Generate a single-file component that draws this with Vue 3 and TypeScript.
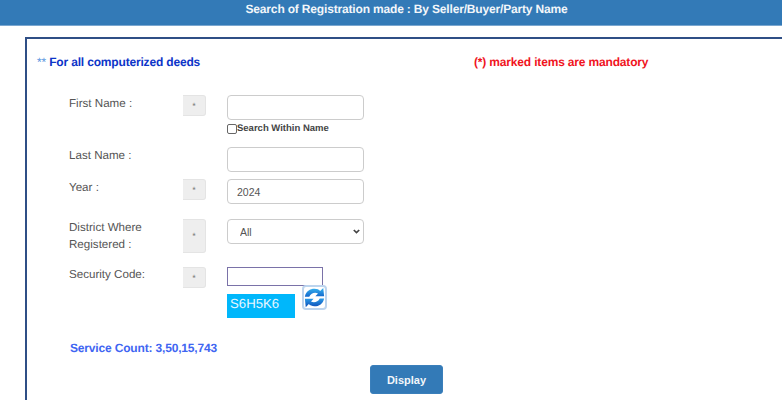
<script setup lang="ts">
import { ref } from 'vue'
const firstName = ref('')
const lastName = ref('')
const year = ref('2024')
const district = ref('All')
const code = ref('')
</script>

<template>
  <div class="page">
    <header class="title">Search of Registration made : By Seller/Buyer/Party Name</header>
    <main class="panel">
      <div class="notes">
        <span class="note-blue"><span class="stars">**</span> For all computerized deeds</span>
        <span class="note-red">(*) marked items are mandatory</span>
      </div>

      <div class="row row-first">
        <label class="label">First Name :</label>
        <span class="addon">*</span>
        <div class="field">
          <input v-model="firstName" class="control" type="text" />
          <label class="within"><input class="check" type="checkbox" />Search Within Name</label>
        </div>
      </div>

      <div class="row row-last">
        <label class="label">Last Name :</label>
        <span class="addon addon-empty"></span>
        <div class="field"><input v-model="lastName" class="control" type="text" /></div>
      </div>

      <div class="row row-year">
        <label class="label">Year :</label>
        <span class="addon">*</span>
        <div class="field"><input v-model="year" class="control" type="text" /></div>
      </div>

      <div class="row row-district">
        <label class="label label-wrap">District Where Registered :</label>
        <span class="addon addon-tall">*</span>
        <div class="field">
          <select v-model="district" class="control select">
            <option>All</option>
          </select>
        </div>
      </div>

      <div class="row row-security">
        <label class="label label-code">Security Code:</label>
        <span class="addon">*</span>
        <div class="field">
          <input v-model="code" class="code-input" type="text" />
          <div class="captcha-row">
            <span class="captcha">S6H5K6</span>
            <button class="refresh" type="button" aria-label="Refresh code">
              <svg viewBox="0 0 24 24" width="21" height="21">
                <defs>
                  <linearGradient id="arrowTop" x1="0" y1="0" x2="0" y2="1">
                    <stop offset="0" stop-color="#35b4f0" />
                    <stop offset="1" stop-color="#1468cc" />
                  </linearGradient>
                  <linearGradient id="arrowBottom" x1="0" y1="1" x2="0" y2="0">
                    <stop offset="0" stop-color="#0f4fb8" />
                    <stop offset="1" stop-color="#2a9ce8" />
                  </linearGradient>
                </defs>
                <path d="M1 11C2 5 7 2 12 2C15 2 17 3 18.500 4.500L22 1L23 10.500L13 10.500L16 7.500C12.500 5.500 8 7 6 11Z" fill="url(#arrowTop)" />
                <path d="M23 13C22 19 17 22 12 22C9 22 7 21 5.500 19.500L2 23L1 13.500L11 13.500L8 16.500C11.500 18.500 16 17 18 13Z" fill="url(#arrowBottom)" />
              </svg>
            </button>
          </div>
        </div>
      </div>

      <p class="count">Service Count: 3,50,15,743</p>
      <button class="display" type="button">Display</button>
    </main>
  </div>
</template>

<style>
html, body { margin: 0; padding: 0; background: #fff; overflow: hidden; }
</style>

<style scoped>
.page {
  width: 782px;
  height: 400px;
  overflow: hidden;
  background: #fff;
  font-family: "Liberation Sans", Arial, sans-serif;
  font-size: 11.6px;
  color: #555;
  text-rendering: geometricPrecision;
}
.title {
  box-sizing: border-box;
  height: 26px;
  padding: 2px 0 0 31px;
  background: #337ab7;
  border-bottom: 1px solid #7ba7d0;
  color: #f2f6fa;
  font-size: 12px;
  font-weight: bold;
  letter-spacing: -0.17px;
  line-height: 14px;
  text-align: center;
}
.panel {
  box-sizing: border-box;
  width: 800px;
  height: 420px;
  margin: 11px 0 0 25px;
  padding: 16px 0 0 10px;
  border-top: 2px solid #2f4f86;
  border-left: 2px solid #2f4f86;
}
.notes {
  display: flex;
  height: 15px;
  font-size: 12px;
  font-weight: bold;
  letter-spacing: -0.17px;
  line-height: 14px;
}
.note-blue { width: 437px; color: #0d35c8; }
.stars { color: #5a96e0; font-weight: normal; }
.note-red { color: #f0141e; }
.row {
  display: grid;
  grid-template-columns: 93px 23px 1fr;
  column-gap: 21px;
  padding-left: 32px;
  align-items: start;
}
.row-first { margin-top: 25px; }
.row-last { margin-top: 12px; }
.row-year { margin-top: 7px; }
.row-district { margin-top: 15px; }
.row-security { margin-top: 14px; }
.label {
  line-height: 17px;
  color: #555;
}
.label-wrap { width: 90px; }
.label-code { margin-top: -1px; }
.addon {
  box-sizing: border-box;
  display: flex;
  align-items: center;
  justify-content: center;
  height: 21px;
  background: #eee;
  border: 1px solid #e4e4e4;
  border-left: 0;
  border-radius: 0 3px 3px 0;
  color: #777;
  font-size: 9px;
}
.addon-empty { visibility: hidden; }
.addon-tall { height: 34px; }
.field { width: 137px; }
.control {
  box-sizing: border-box;
  display: block;
  width: 137px;
  height: 25px;
  padding: 0 9px;
  background: #fff;
  border: 1px solid #ccc;
  border-radius: 4px;
  color: #555;
  font-family: inherit;
  font-size: 10.5px;
  outline: none;
}
.select {
  padding: 0 12px;
  appearance: none;
  background-image: url("data:image/svg+xml,%3Csvg xmlns='http://www.w3.org/2000/svg' width='7' height='5'%3E%3Cpath d='M.8 1l2.700 2.600L6.200 1' fill='none' stroke='%23444' stroke-width='1.700'/%3E%3C/svg%3E");
  background-repeat: no-repeat;
  background-position: right 3px center;
}
.within {
  display: flex;
  align-items: center;
  height: 13px;
  margin-top: 2px;
  color: #444;
  font-size: 9.5px;
  font-weight: bold;
}
.check {
  box-sizing: border-box;
  width: 10px;
  height: 10px;
  margin: 0;
  appearance: none;
  background: #fff;
  border: 1px solid #666;
  border-radius: 2px;
}
.code-input {
  box-sizing: border-box;
  display: block;
  width: 96px;
  height: 19px;
  padding: 0 2px;
  background: #fff;
  border: 1px solid #7a72a8;
  outline: none;
}
.captcha-row {
  display: flex;
  align-items: flex-start;
  margin-top: 8px;
}
.captcha {
  box-sizing: border-box;
  display: block;
  flex: none;
  width: 68px;
  height: 24px;
  padding: 1px 0 0 3px;
  background: #00b7fb;
  color: #e8f6ff;
  font-size: 13.2px;
  line-height: 17px;
}
.refresh {
  box-sizing: border-box;
  display: flex;
  align-items: center;
  justify-content: center;
  flex: none;
  width: 25px;
  height: 25px;
  margin: -9px 0 0 7px;
  padding: 0;
  background: #fff;
  border: 2px solid #bcd4ee;
  border-radius: 4px;
}
.count {
  margin: 23px 0 0 33px;
  color: #3f66f2;
  font-size: 12px;
  font-weight: bold;
  letter-spacing: -0.17px;
  line-height: 14px;
}
.display {
  box-sizing: border-box;
  display: block;
  width: 73px;
  height: 29px;
  margin: 10px 0 0 333px;
  padding: 0;
  background: #337ab7;
  border: 1px solid #3a7fbb;
  border-radius: 3px;
  color: #f2f6fa;
  font-family: inherit;
  font-size: 11px;
  font-weight: bold;
}
</style>
